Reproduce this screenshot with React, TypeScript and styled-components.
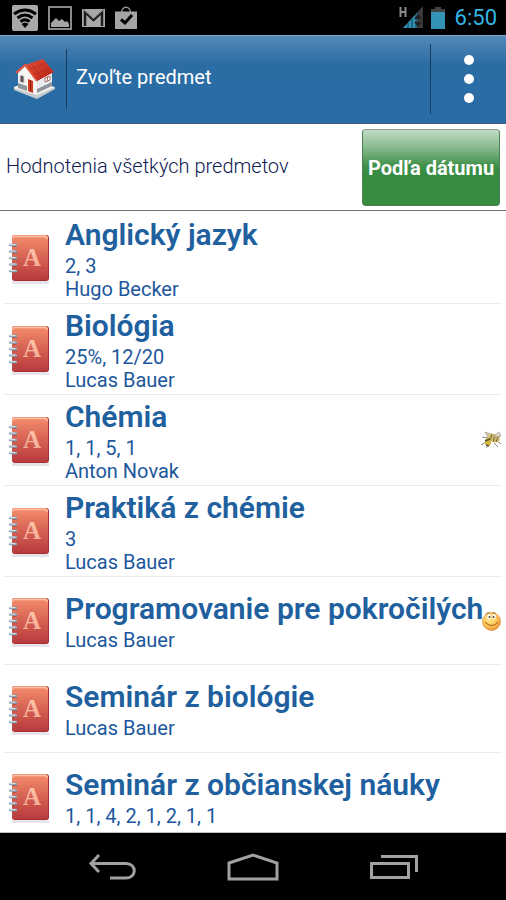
import React from "react";
import styled, { createGlobalStyle } from "styled-components";

const GlobalStyle = createGlobalStyle`
  * { box-sizing: border-box; }
  body { margin: 0; background: #fff; font-family: Roboto, "Noto Sans", sans-serif; }
  button { font-family: inherit; border: 0; padding: 0; background: none; cursor: pointer; }
  svg { display: block; flex: none; }
`;

const Screen = styled.div`
  height: 100vh;
  display: flex;
  flex-direction: column;
  overflow: hidden;
`;

const StatusBar = styled.div`
  flex: none;
  height: 35px;
  padding: 0 9px 0 12px;
  display: flex;
  align-items: center;
  justify-content: space-between;
  background: #000;
`;

const StatusGroup = styled.div<{ $gap: number }>`
  display: flex;
  align-items: center;
  gap: ${(p) => p.$gap}px;
`;

const Clock = styled.time`
  padding-left: 2px;
  color: #33b5e5;
  font-size: 22px;
  line-height: 34px;
`;

const Header = styled.header`
  flex: none;
  height: 89px;
  padding-bottom: 2px;
  display: flex;
  align-items: center;
  background: linear-gradient(#5389b7 0, #2b6ca4 28px, #286ca6 100%);
  border-top: 1px solid #79a3c8;
  border-bottom: 1px solid #43566c;
`;

const HomeButton = styled.button`
  width: 67px;
  height: 60px;
  display: flex;
  align-items: center;
  padding-left: 13px;
  border-right: 1px solid #173c5e;
`;

const HeaderTitle = styled.h1`
  flex: 1;
  margin: 0;
  padding: 0 0 4px 9px;
  color: #fff;
  font-size: 20px;
  font-weight: 400;
  line-height: 24px;
`;

const MenuButton = styled.button`
  width: 76px;
  height: 70px;
  display: flex;
  align-items: center;
  justify-content: center;
  border-left: 1px solid #173c5e;
`;

const FilterBar = styled.section`
  flex: none;
  display: flex;
  align-items: center;
  justify-content: space-between;
  padding: 5px 6px 4px;
  border-bottom: 1px solid #707070;
`;

const FilterLabel = styled.h2`
  margin: 0;
  padding-bottom: 4px;
  color: #0d1b52;
  font-size: 20px;
  font-weight: 300;
  line-height: 24px;
`;

const DateButton = styled.button`
  && {
    width: 138px;
    height: 77px;
    color: #fff;
    font-size: 20px;
    font-weight: 700;
    background: linear-gradient(#c2dcc6 0, #8dbd94 16px, #3f9049 36px, #358c40 44px, #388d43 100%);
    border: 1px solid #4c7f53;
    border-top-color: #8e9c90;
    border-radius: 4px;
  }
`;

const List = styled.ul`
  flex: 1;
  min-height: 0;
  margin: 0;
  padding: 2px 4px 0;
  overflow: hidden;
  list-style: none;
  border-bottom: 1px solid #bdbdbd;
`;

const Row = styled.li`
  min-height: 88px;
  padding: 2px 0 2px 4px;
  display: flex;
  align-items: center;
  border-bottom: 1px solid #eaecf5;
`;

const RowText = styled.div`
  flex: 1;
  min-width: 0;
  padding-left: 13px;
  white-space: nowrap;
`;

const Subject = styled.h3`
  margin: 0;
  color: #20609e;
  font-size: 30px;
  font-weight: 600;
  line-height: 40px;
`;

const Detail = styled.p`
  margin: 0;
  color: #1c579d;
  font-size: 20px;
  font-weight: 400;
  line-height: 23px;
`;

const NavBar = styled.nav`
  flex: none;
  height: 67px;
  padding: 0 56px;
  display: flex;
  align-items: center;
  justify-content: space-between;
  background: #000;
`;

const NavButton = styled.button`
  width: 112px;
  height: 67px;
  display: flex;
  align-items: center;
  justify-content: center;
`;

const WifiIcon = () => (
  <svg width="26" height="26" viewBox="0 0 26 26">
    <rect width="26" height="26" rx="2" fill="#a9a9a9" />
    <g fill="none" stroke="#000" strokeWidth="3">
      <path d="M2 9Q13 1 24 9" />
      <path d="M5.5 13Q13 7 20.5 13" />
      <path d="M8.5 16.7Q13 13 17.5 16.7" />
    </g>
    <path d="M9.5 19Q13 16.5 16.5 19L13 23Z" fill="#000" />
  </svg>
);

const PictureIcon = () => (
  <svg width="24" height="24" viewBox="0 0 24 24">
    <rect x="1" y="1" width="22" height="22" fill="none" stroke="#8a8a8a" strokeWidth="2" />
    <path d="M3 21V17L8 12L11 15L14 13L17 16L19 15L21 18V21Z" fill="#a5a5a5" />
  </svg>
);

const MailIcon = () => (
  <svg width="23" height="18" viewBox="0 0 23 18">
    <rect width="23" height="18" fill="#a8a8a8" />
    <path d="M3 17V3L11.500 11L20 3V17" fill="none" stroke="#1c1c1c" strokeWidth="2.500" />
    <path d="M2 1L11.500 9.500L21 1" fill="none" stroke="#a8a8a8" strokeWidth="1" />
  </svg>
);

const BagIcon = () => (
  <svg width="22" height="24" viewBox="0 0 22 24">
    <path d="M6.500 7C6.500-.7 15.500-.7 15.500 7" fill="none" stroke="#999" strokeWidth="1.500" />
    <path d="M0 5.500H22V23H0Z" fill="#a5a5a5" />
    <path d="M6 13.500L10 17L17 9" fill="none" stroke="#000" strokeWidth="3" />
  </svg>
);

const SignalIcon = () => (
  <svg width="24" height="24" viewBox="0 0 24 24">
    <path d="M1.500 1V11M6.500 1V11M1.500 6H6.500" stroke="#8a8a8a" strokeWidth="2" fill="none" />
    <path d="M24 0V22H4Z" fill="#3a3a3a" />
    <path d="M18 7V22H4Z" fill="#2f91b5" />
    <path d="M9 17V22M13 13V22M17 9V22" stroke="#0f3e50" strokeWidth="1" />
    <path d="M19 8L23 13H15ZM19 21L23 16H15Z" fill="#222" />
  </svg>
);

const BatteryIcon = () => (
  <svg width="14" height="22" viewBox="0 0 14 22">
    <path d="M4 0H10V2H14V6H0V2H4Z" fill="#424242" />
    <rect y="5" width="14" height="17" fill="#3593b5" />
  </svg>
);

const HouseIcon = () => (
  <svg width="43" height="43" viewBox="0 0 43 43" aria-hidden="true">
    <defs>
      <linearGradient id="roof" x1="0" y1="0" x2="1" y2="1">
        <stop offset="0" stopColor="#e3523a" />
        <stop offset="1" stopColor="#b81e12" />
      </linearGradient>
    </defs>
    <path d="M1 30L17 24L42 30L24 41L1 32Z" fill="#f4f4f2" />
    <path d="M1 31L24 38L42 30V32L24 42L1 33Z" fill="#c6cbcf" />
    <path d="M5 16L12 9L24 20V37L5 31Z" fill="#f7f6f3" />
    <path d="M24 24L39 15V29L24 36Z" fill="#e8eaee" />
    <path d="M5 26L14 29V34L5 31ZM24 32L39 25V29L24 36Z" fill="#8d949b" />
    <path d="M12 8L30 2L41 15L24 24Z" fill="url(#roof)" />
    <path d="M3 16L12 8L24 24" fill="none" stroke="#e5553f" strokeWidth="2" />
    <path d="M18 7L29 21M22 5L33 19M26 4L37 17M16 12L33 6M20 18L37 11" stroke="#a81f17" strokeWidth="1" opacity=".4" />
    <path d="M7 18L11 19V26L7 25Z" fill="#5e5357" stroke="#d6d6d6" strokeWidth="1" />
    <path d="M15 22L20 24V36L15 34Z" fill="#cf3b1c" />
    <path d="M17.500 23V35" stroke="#8e210e" strokeWidth="1" />
    <path d="M32 21L37 19V23L32 25Z" fill="#fff" stroke="#ae6c68" strokeWidth="1" />
    <path d="M34.500 20V24" stroke="#ae6c68" strokeWidth="1" />
  </svg>
);

const DotsIcon = () => (
  <svg width="12" height="50" viewBox="0 0 12 50" fill="#fff" aria-hidden="true">
    <circle cx="6" cy="6" r="5" />
    <circle cx="6" cy="25" r="5" />
    <circle cx="6" cy="44" r="5" />
  </svg>
);

const BookIcon = () => (
  <svg width="44" height="52" viewBox="0 -2 44 52" aria-hidden="true">
    <defs>
      <linearGradient id="cover" x1="0" y1="0" x2="0" y2="1">
        <stop offset="0" stopColor="#f58d6d" />
        <stop offset=".5" stopColor="#d66253" />
        <stop offset="1" stopColor="#b83a3e" />
      </linearGradient>
      <linearGradient id="letter" x1="0" y1="0" x2="0" y2="1">
        <stop offset="0" stopColor="#ffc9ad" />
        <stop offset="1" stopColor="#f2a893" />
      </linearGradient>
    </defs>
    <rect x="4" y="47" width="37" height="3" fill="#e6e4ea" />
    <rect x="4" y="1" width="37" height="46" rx="3" fill="#a52f33" />
    <rect x="4" y="1" width="36" height="45" rx="3" fill="url(#cover)" />
    <path d="M5 4.500Q5 2.500 7 2.500H37Q39 2.500 39 5" fill="none" stroke="#ffc0a4" strokeWidth="1.500" />
    <g fill="none" strokeLinecap="round">
      <path d="M5 12H8M5 18.500H8M5 25H8M5 31.500H8M5 38H8" stroke="#9d4743" strokeWidth="2" />
      <path d="M2 11H8M2 17.500H8M2 24H8M2 30.500H8M2 37H8" stroke="#93a8b8" strokeWidth="2.500" />
      <path d="M2 10.500H7M2 17H7M2 23.500H7M2 30H7M2 36.500H7" stroke="#d6e1e8" strokeWidth="1" />
    </g>
    <text x="24" y="32" textAnchor="middle" fill="url(#letter)" fontFamily="'Liberation Serif', serif" fontSize="25" fontWeight="700">A</text>
  </svg>
);

const BeeIcon = () => (
  <svg width="22" height="20" viewBox="0 0 22 20" role="img" aria-label="Včela">
    <path d="M8 8L2 7M8 11L1 15M11 13L6 18M14 13L18 17M16 10L21 14M14 8L20 6" stroke="#8d8684" strokeWidth="1" fill="none" />
    <path d="M9 9L5 2L14 5Z" fill="#d9ccb4" stroke="#a29784" strokeWidth=".7" />
    <ellipse cx="14" cy="8" rx="6" ry="4" fill="#d2bd60" transform="rotate(20 14 8)" />
    <path d="M12 4L10 11M15 5L13 12M18 7L16 12" stroke="#75654c" strokeWidth="1" />
    <ellipse cx="8" cy="12" rx="3" ry="4" fill="#d3b63d" />
    <path d="M5 11L10 9M6 15L9 16" stroke="#625138" strokeWidth="1.500" />
    <path d="M13 7L19 2L21 6Z" fill="#e2dbcb" stroke="#9d9689" strokeWidth=".7" />
  </svg>
);

const SmileIcon = () => (
  <svg width="20" height="20" viewBox="0 0 20 20" role="img" aria-label="Úsmev">
    <defs>
      <radialGradient id="face" cx=".4" cy=".35" r=".7">
        <stop offset="0" stopColor="#ffea95" />
        <stop offset=".6" stopColor="#ffc451" />
        <stop offset="1" stopColor="#e98a32" />
      </radialGradient>
    </defs>
    <circle cx="9.500" cy="10.500" r="9" fill="url(#face)" stroke="#d98a45" strokeWidth=".7" />
    <path d="M4 3Q6 1 7.500 2M10.500 2Q12 1 14 3" fill="none" stroke="#a66a35" strokeWidth="1" />
    <ellipse cx="7" cy="5.500" rx="1.800" ry="2.500" fill="#fff" />
    <ellipse cx="12" cy="5.500" rx="1.800" ry="2.500" fill="#fff" />
    <circle cx="7.500" cy="6" r="1" fill="#554242" />
    <circle cx="11.500" cy="6" r="1" fill="#554242" />
    <path d="M3 11Q9.500 18 16 11" fill="none" stroke="#a45323" strokeWidth="1" />
  </svg>
);

const BackIcon = () => (
  <svg width="48" height="28" viewBox="0 0 48 28" fill="none" stroke="#a2a2a2" strokeWidth="3" aria-hidden="true">
    <path d="M11 2L3 10.500L11 19M3 10.500H38C49 10.500 49 25 38 25H22" />
  </svg>
);

const HomeIcon = () => (
  <svg width="52" height="28" viewBox="0 0 52 28" fill="none" stroke="#a2a2a2" strokeWidth="3" aria-hidden="true">
    <path d="M2 10L26 2L50 10V26H2Z" />
  </svg>
);

const RecentIcon = () => (
  <svg width="48" height="26" viewBox="0 0 48 26" fill="none" stroke="#a2a2a2" strokeWidth="3" aria-hidden="true">
    <path d="M1.500 9.500H38.500V23.500H1.500ZM11 2.500H46.500V18" />
  </svg>
);

type Entry = { subject: string; details: string[]; mark?: React.ReactNode };

const entries: Entry[] = [
  { subject: "Anglický jazyk", details: ["2, 3", "Hugo Becker"] },
  { subject: "Biológia", details: ["25%, 12/20", "Lucas Bauer"] },
  { subject: "Chémia", details: ["1, 1, 5, 1", "Anton Novak"], mark: <BeeIcon /> },
  { subject: "Praktiká z chémie", details: ["3", "Lucas Bauer"] },
  { subject: "Programovanie pre pokročilých", details: ["Lucas Bauer"], mark: <SmileIcon /> },
  { subject: "Seminár z biológie", details: ["Lucas Bauer"] },
  { subject: "Seminár z občianskej náuky", details: ["1, 1, 4, 2, 1, 2, 1, 1"] },
];

export default function App() {
  return (
    <>
      <GlobalStyle />
      <Screen>
        <StatusBar>
          <StatusGroup $gap={10}>
            <WifiIcon />
            <PictureIcon />
            <MailIcon />
            <BagIcon />
          </StatusGroup>
          <StatusGroup $gap={8}>
            <SignalIcon />
            <BatteryIcon />
            <Clock>6:50</Clock>
          </StatusGroup>
        </StatusBar>
        <Header>
          <HomeButton aria-label="Domov">
            <HouseIcon />
          </HomeButton>
          <HeaderTitle>Zvoľte predmet</HeaderTitle>
          <MenuButton aria-label="Ponuka">
            <DotsIcon />
          </MenuButton>
        </Header>
        <FilterBar>
          <FilterLabel>Hodnotenia všetkých predmetov</FilterLabel>
          <DateButton>Podľa dátumu</DateButton>
        </FilterBar>
        <List>
          {entries.map((entry) => (
            <Row key={entry.subject}>
              <BookIcon />
              <RowText>
                <Subject>{entry.subject}</Subject>
                {entry.details.map((line) => (
                  <Detail key={line}>{line}</Detail>
                ))}
              </RowText>
              {entry.mark}
            </Row>
          ))}
        </List>
        <NavBar>
          <NavButton aria-label="Späť">
            <BackIcon />
          </NavButton>
          <NavButton aria-label="Plocha">
            <HomeIcon />
          </NavButton>
          <NavButton aria-label="Nedávne aplikácie">
            <RecentIcon />
          </NavButton>
        </NavBar>
      </Screen>
    </>
  );
}
